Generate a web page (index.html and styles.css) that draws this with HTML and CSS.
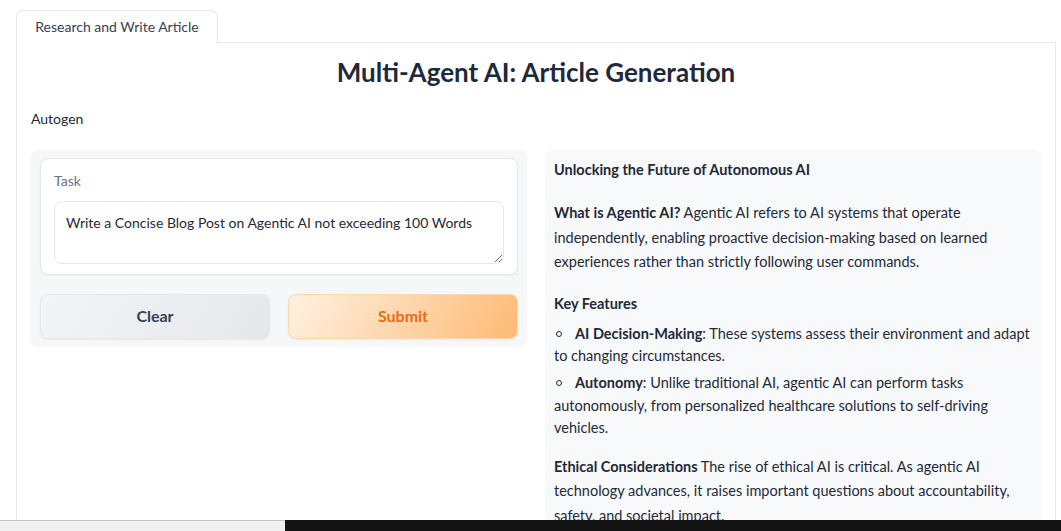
FILE: index.html
```html
<!DOCTYPE html>
<html lang="en">
<head>
<meta charset="utf-8">
<title>Multi-Agent AI: Article Generation</title>
<link rel="stylesheet" href="styles.css">
</head>
<body>
<div class="page">
  <div class="tabs">
    <button class="tab">Research and Write Article</button>
  </div>
  <div class="panel">
    <h1 class="title">Multi-Agent AI: Article Generation</h1>
    <p class="subtitle">Autogen</p>
    <div class="row">
      <div class="col-left">
        <div class="card">
          <label class="label">Task</label>
          <textarea class="input">Write a Concise Blog Post on Agentic AI not exceeding 100 Words</textarea>
        </div>
        <div class="buttons">
          <button class="btn btn-secondary">Clear</button>
          <button class="btn btn-primary">Submit</button>
        </div>
      </div>
      <div class="col-right">
        <div class="prose">
          <p class="lead"><strong>Unlocking the Future of Autonomous AI</strong></p>
          <p><strong>What is Agentic AI?</strong> Agentic AI refers to AI systems that operate independently, enabling proactive decision-making based on learned experiences rather than strictly following user commands.</p>
          <p class="heading"><strong>Key Features</strong></p>
          <ul class="list">
            <li><strong>AI Decision-Making</strong>: These systems assess their environment and adapt to changing circumstances.</li>
            <li><strong>Autonomy</strong>: Unlike traditional AI, agentic AI can perform tasks autonomously, from personalized healthcare solutions to self-driving vehicles.</li>
          </ul>
          <p><strong>Ethical Considerations</strong> The rise of ethical AI is critical. As agentic AI technology advances, it raises important questions about accountability, safety, and societal impact.</p>
        </div>
      </div>
    </div>
  </div>
</div>
<div class="taskbar">
  <div class="taskbar-left"></div>
  <div class="taskbar-right"></div>
</div>
</body>
</html>
```
FILE: styles.css
```css
* { box-sizing: border-box; }
html, body { margin: 0; padding: 0; background: #ffffff; overflow: hidden; height: 531px; }
body { font-family: "Lato", "Open Sans", sans-serif; color: #1f2937; }

.page { padding: 10px 5px 0 16px; }

.tabs { display: flex; position: relative; z-index: 1; }
.tab {
  font-family: inherit;
  font-size: 14px;
  color: #374151;
  background: #ffffff;
  border: 1px solid #e5e7eb;
  border-bottom: none;
  border-radius: 7px 7px 0 0;
  height: 33px;
  padding: 0 18px 2px 18px;
  margin-bottom: -1px;
  width: 202px;
  cursor: pointer;
}

.panel {
  border: 1px solid #e5e7eb;
  border-bottom: none;
  padding: 12px 13px 0 13px;
  height: 478px;
}

.title {
  margin: 0;
  text-align: center;
  font-size: 26px;
  font-weight: 700;
  color: #1e293b;
  line-height: 34px;
}

.subtitle {
  margin: 20px 0 0 1px;
  font-size: 14px;
  line-height: 20px;
  color: #1f2937;
}

.row {
  display: grid;
  grid-template-columns: 497px 497px;
  gap: 18px;
  margin-top: 21px;
}

.col-left {
  background: #f6f7f9;
  border-radius: 8px;
  padding: 8px 9px 8px 10px;
  align-self: start;
  display: flex;
  flex-direction: column;
  gap: 19px;
}

.card {
  background: #ffffff;
  border: 1px solid #e5e7eb;
  border-radius: 8px;
  padding: 12px 13px 10px 13px;
  box-shadow: 0 1px 2px rgba(0,0,0,0.04);
  display: flex;
  flex-direction: column;
  gap: 10px;
}

.label {
  font-size: 14px;
  color: #6b7280;
  line-height: 20px;
}

.input {
  font-family: inherit;
  font-size: 14px;
  color: #1f2937;
  border: 1px solid #e5e7eb;
  border-radius: 8px;
  height: 63px;
  padding: 11px 11px;
  resize: vertical;
  line-height: 20px;
  background: #ffffff;
}

.buttons {
  display: grid;
  grid-template-columns: 1fr 1fr;
  gap: 18px;
}

.btn {
  font-family: inherit;
  font-size: 16px;
  font-weight: 700;
  height: 45px;
  border-radius: 8px;
  padding-bottom: 3px;
  cursor: pointer;
}

.btn-secondary {
  background: linear-gradient(120deg, #f3f4f6, #e5e7eb);
  border: 1px solid #e5e7eb;
  color: #374151;
  box-shadow: 0 1px 2px rgba(0,0,0,0.06);
}

.btn-primary {
  background: linear-gradient(120deg, #fff1e2, #fdba74);
  border: 1px solid #fed7aa;
  color: #ea6a15;
  box-shadow: 0 1px 2px rgba(0,0,0,0.06);
}

.col-right {
  background: #f8f9fb;
  border-radius: 8px;
  padding: 9px 9px 20px 9px;
  height: 400px;
}

.prose { font-size: 14.5px; color: #1f2937; }
.prose p { margin: 0 0 18px 0; line-height: 24.5px; }
.prose p.lead { line-height: 22px; margin-bottom: 20px; }
.prose p.heading { line-height: 22px; margin-bottom: 16px; }
.prose strong { font-weight: 700; }

.list {
  margin: -8px 0 15px 0;
  padding: 0;
  list-style: none;
  line-height: 22.5px;
}
.list li { margin-bottom: 4.5px; }
.list li::before {
  content: "";
  display: inline-block;
  width: 4px;
  height: 4px;
  border: 1px solid #1f2937;
  border-radius: 50%;
  margin: 0 13px 2px 2px;
  vertical-align: middle;
}

.taskbar {
  position: fixed;
  left: 0;
  right: 0;
  bottom: 0;
  height: 11px;
  display: flex;
}
.taskbar-left {
  width: 285px;
  background: #f0f0f0;
  border-top: 1px solid #c4c4c4;
}
.taskbar-right {
  flex: 1;
  background: #141414;
}
```
